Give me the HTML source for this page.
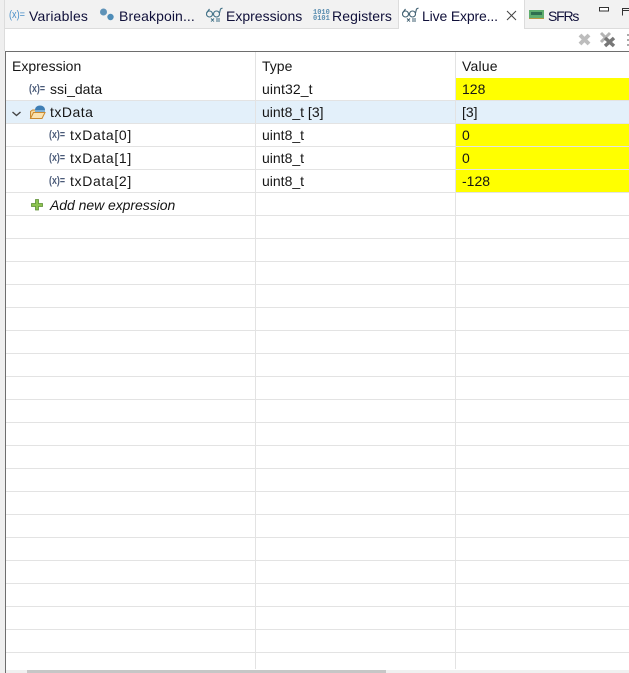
<!DOCTYPE html>
<html><head><meta charset="utf-8"><style>
html,body{margin:0;padding:0;background:#fff}
#p{position:relative;width:629px;height:673px;overflow:hidden;background:#fff;font-family:"Liberation Sans",sans-serif;font-size:14px;color:#161616}
#p div{position:absolute}
.t{white-space:nowrap;line-height:18px;height:18px}
.n{color:#10103a}
.l{left:6px;width:623px;height:1px;background:#e3e3e3}
.y{left:456px;width:173px;height:22px;background:#ffff00}
svg{position:absolute;overflow:visible}
.x{font-family:"Liberation Sans",sans-serif;font-weight:bold;font-size:11px;fill:#4a5a78}
</style></head><body><div id="p">
<div style="left:0;top:0;width:629px;height:28px;background:#f2f2f2"></div>
<div style="left:0;top:28px;width:629px;height:1px;background:#dcdcdc"></div>
<div style="left:0;top:0;width:5px;height:673px;background:#efefef"></div>
<div style="left:4px;top:0;width:1px;height:51px;background:#dcdcdc"></div>
<div style="left:398px;top:0;width:127px;height:29px;background:#fff"></div>
<div style="left:398px;top:0;width:1px;height:29px;background:#dcdcdc"></div>
<div style="left:524px;top:0;width:1px;height:29px;background:#dcdcdc"></div>

<svg style="left:0;top:0" width="629" height="50">
<text x="9" y="18" font-family="Liberation Sans" font-size="11" textLength="16" lengthAdjust="spacingAndGlyphs" fill="#4a8fc8">(x)=</text>
<circle cx="103.500" cy="12" r="3.500" fill="#5f93b8"/><circle cx="110.500" cy="17" r="3.200" fill="#4f8db8"/>
<g fill="none" stroke="#3f6f85" stroke-width="1.100"><circle cx="209.500" cy="14" r="3"/><circle cx="216.500" cy="14" r="3"/><path d="M206.500 13l3-4M219.500 13l1-4 2-1"/></g>
<path d="M211 18.500l3 3M214 18.500l-3 3M216 19h4M216 21h4" stroke="#3f6f85" stroke-width="1" fill="none"/>
<text x="313" y="14" font-family="Liberation Mono" font-size="7" font-weight="bold" fill="#5a8db0">1010</text>
<text x="313" y="20" font-family="Liberation Mono" font-size="7" font-weight="bold" fill="#5a8db0">0101</text>
<g fill="none" stroke="#3f5f70" stroke-width="1.100"><circle cx="405.500" cy="14" r="3"/><circle cx="412.500" cy="14" r="3"/><path d="M402.500 13l3-4M415.500 13l1-4 2-1"/></g>
<path d="M407 18.500l3 3M410 18.500l-3 3M412 19h4M412 21h4" stroke="#3f5f70" stroke-width="1" fill="none"/>
<path d="M507 11l9 9M516 11l-9 9" stroke="#444" stroke-width="1" fill="none"/>
<rect x="529" y="10" width="15" height="8" fill="#5fae6f"/><rect x="531" y="12" width="11" height="3" fill="#2f6f4f"/><rect x="529" y="18" width="15" height="1" fill="#b89a40"/>
<rect x="599.500" y="7.500" width="9" height="3.500" fill="#fff" stroke="#333"/>
<path d="M622.500 15.500V8.500H630" fill="none" stroke="#333"/><path d="M622 10.500H630" stroke="#333"/>
<g stroke="#bdbdbd" stroke-width="4"><path d="M580 35l9 9M589 35l-9 9"/></g>
<g stroke="#b5b5b5" stroke-width="3"><path d="M601 33l9 9M610 33l-9 9"/></g>
<g stroke="#777" stroke-width="3.500"><path d="M605 38l9 8M614 38l-9 8"/></g>
<path d="M628 34v2M628 39v2M628 44v2" stroke="#aaa" stroke-width="2"/>
</svg>

<div class="t n" style="left:29px;top:7px;letter-spacing:.2px">Variables</div>
<div class="t n" style="left:119px;top:7px;letter-spacing:.1px">Breakpoin...</div>
<div class="t n" style="left:226px;top:7px">Expressions</div>
<div class="t n" style="left:332px;top:7px;letter-spacing:.1px">Registers</div>
<div class="t n" style="left:422px;top:7px;letter-spacing:-.15px">Live Expre...</div>
<div class="t n" style="left:548px;top:7px;letter-spacing:-1.2px">SFRs</div>

<!-- table -->
<div style="left:5px;top:51px;width:624px;height:1px;background:#6e6e6e"></div>
<div style="left:5px;top:51px;width:1px;height:622px;background:#6e6e6e"></div>
<div style="left:6px;top:101px;width:623px;height:22px;background:#e3f0fa"></div>
<div class="y" style="top:78px"></div>
<div class="y" style="top:124px"></div>
<div class="y" style="top:147px"></div>
<div class="y" style="top:170px"></div>

<div class="l" style="top:100px"></div><div class="l" style="top:123px"></div><div class="l" style="top:146px"></div><div class="l" style="top:169px"></div><div class="l" style="top:192px"></div><div class="l" style="top:215px"></div><div class="l" style="top:238px"></div><div class="l" style="top:261px"></div><div class="l" style="top:284px"></div><div class="l" style="top:307px"></div><div class="l" style="top:330px"></div><div class="l" style="top:353px"></div><div class="l" style="top:376px"></div><div class="l" style="top:399px"></div><div class="l" style="top:422px"></div><div class="l" style="top:445px"></div><div class="l" style="top:468px"></div><div class="l" style="top:491px"></div><div class="l" style="top:514px"></div><div class="l" style="top:537px"></div><div class="l" style="top:560px"></div><div class="l" style="top:583px"></div><div class="l" style="top:606px"></div><div class="l" style="top:629px"></div><div class="l" style="top:652px"></div>
<div style="left:255px;top:52px;width:1px;height:617px;background:#e3e3e3"></div>
<div style="left:455px;top:52px;width:1px;height:617px;background:#e3e3e3"></div>

<div class="t" style="left:12px;top:57px">Expression</div>
<div class="t" style="left:262px;top:57px">Type</div>
<div class="t" style="left:462px;top:57px;letter-spacing:.2px">Value</div>

<svg style="left:0;top:0" width="629" height="220">
<text class="x" x="29" y="92" textLength="16" lengthAdjust="spacingAndGlyphs">(x)=</text>
<text class="x" x="49" y="138" textLength="16" lengthAdjust="spacingAndGlyphs">(x)=</text>
<text class="x" x="49" y="161" textLength="16" lengthAdjust="spacingAndGlyphs">(x)=</text>
<text class="x" x="49" y="184" textLength="16" lengthAdjust="spacingAndGlyphs">(x)=</text>
<path d="M12.500 112l4 3.500 4-3.500" fill="none" stroke="#444" stroke-width="1.400"/>
<path d="M30.500 118.500v-7l2-1.500h12v3" fill="#f5d9a0" stroke="#c98a30"/>
<path d="M30.500 118.500l3-6h11.500l-3 6z" fill="#fbe3b0" stroke="#c98a30"/>
<path d="M35 110c0-6 10-6 10 0z" fill="#3f7fb5"/><rect x="35" y="110" width="10" height="2" fill="#7fb0d5"/>
<path d="M35.500 199.500h3v4h4v3h-4v3.500h-3v-3.500h-4v-3h4z" fill="#8cc34f" stroke="#5c8f35" stroke-width=".8"/>
</svg>

<div class="t" style="left:50px;top:80px">ssi_data</div>
<div class="t" style="left:50px;top:103px;letter-spacing:.5px">txData</div>
<div class="t" style="left:70px;top:126px;letter-spacing:.65px">txData[0]</div>
<div class="t" style="left:70px;top:149px;letter-spacing:.65px">txData[1]</div>
<div class="t" style="left:70px;top:172px;letter-spacing:.65px">txData[2]</div>
<div class="t" style="left:50px;top:196px;font-style:italic;letter-spacing:-.05px">Add new expression</div>

<div class="t" style="left:262px;top:80px;letter-spacing:.1px">uint32_t</div>
<div class="t" style="left:262px;top:103px">uint8_t [3]</div>
<div class="t" style="left:262px;top:126px">uint8_t</div>
<div class="t" style="left:262px;top:149px">uint8_t</div>
<div class="t" style="left:262px;top:172px">uint8_t</div>

<div class="t" style="left:462px;top:80px">128</div>
<div class="t" style="left:462px;top:103px">[3]</div>
<div class="t" style="left:462px;top:126px">0</div>
<div class="t" style="left:462px;top:149px">0</div>
<div class="t" style="left:462px;top:172px">-128</div>

<div style="left:6px;top:670px;width:623px;height:3px;background:#f0f0f0"></div>
<div style="left:27px;top:670px;width:359px;height:3px;background:#c6c6c6"></div>
</div></body></html>
